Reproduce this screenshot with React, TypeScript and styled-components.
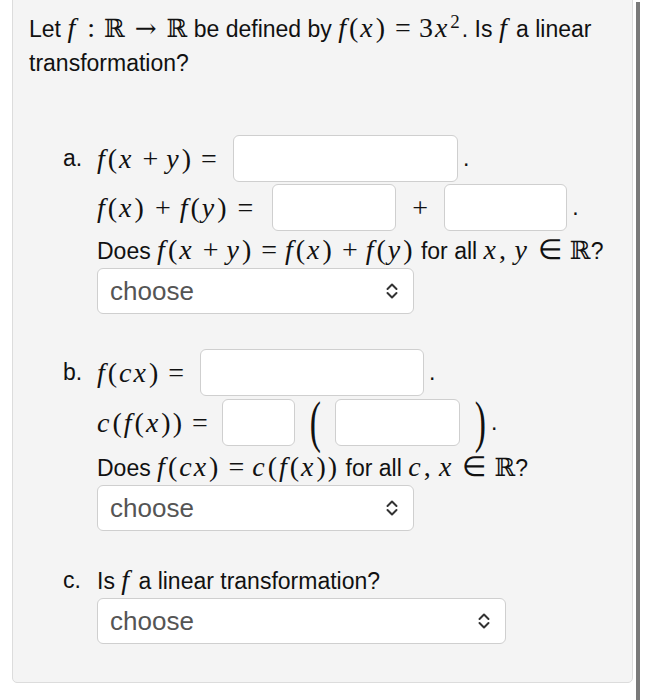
import React from 'react';
import styled, { createGlobalStyle } from 'styled-components';

const GlobalStyle = createGlobalStyle`
  html, body {
    margin: 0;
    padding: 0;
    background: #ffffff;
  }
  body {
    font-family: 'Liberation Sans', Arial, sans-serif;
    color: #111;
  }
`;

const Page = styled.div`
  display: flex;
  align-items: stretch;
  width: 647px;
  height: 700px;
  overflow: hidden;
`;

const Panel = styled.div`
  margin: -10px 0 0 12px;
  width: 621px;
  height: 693px;
  box-sizing: border-box;
  padding: 20px 16px 0 16px;
  background: #f4f4f4;
  border: 1px solid #dcdcdc;
  border-radius: 5px;
`;

const ScrollBar = styled.div`
  margin: 2px 0 0 3px;
  width: 4px;
  background: #7a7a7a;
`;

const Intro = styled.p`
  margin: 0;
  font-size: 23px;
  line-height: 34px;
  white-space: nowrap;
`;

const Parts = styled.div`
  display: flex;
  flex-direction: column;
  margin-top: 55px;
  padding-left: 34px;
`;

const Part = styled.div<{ $gap: number }>`
  display: grid;
  grid-template-columns: 34px 1fr;
  margin-top: ${(p) => p.$gap}px;
`;

const Label = styled.div<{ $lh?: number }>`
  font-size: 23px;
  line-height: ${(p) => p.$lh ?? 47}px;
`;

const Body = styled.div`
  display: flex;
  flex-direction: column;
`;

const Row = styled.div<{ $top?: number }>`
  display: flex;
  align-items: center;
  height: 47px;
  margin-top: ${(p) => p.$top ?? 0}px;
  white-space: nowrap;
`;

const Line = styled.div<{ $top?: number }>`
  font-size: 23px;
  line-height: 30px;
  margin-top: ${(p) => p.$top ?? 0}px;
  white-space: nowrap;
`;

const M = styled.span`
  font-family: 'Liberation Serif', 'Times New Roman', serif;
  font-size: 28px;
  letter-spacing: 2px;
`;

const I = styled.i`
  font-family: 'Liberation Serif', 'Times New Roman', serif;
  font-style: italic;
  font-size: 28px;
  letter-spacing: 2px;
  padding-right: 1px;
`;

const Op = styled.span<{ $sp?: number }>`
  font-family: 'Liberation Serif', 'Times New Roman', serif;
  font-size: 28px;
  margin: 0 ${(p) => p.$sp ?? 8}px;
`;

const Arrow = styled.span`
  font-family: 'DejaVu Serif', serif;
  font-size: 26px;
  margin: 0 10px;
`;

const DS = styled.span`
  font-family: 'DejaVu Serif', serif;
  font-size: 25px;
`;

const Sup = styled.sup`
  font-family: 'Liberation Serif', serif;
  font-size: 19px;
  line-height: 0;
  margin-right: 2px;
`;

const Field = styled.div<{ $w: number }>`
  width: ${(p) => p.$w}px;
  height: 47px;
  box-sizing: border-box;
  background: #ffffff;
  border: 1px solid #cfcfcf;
  border-radius: 6px;
  flex-shrink: 0;
`;

const Dot = styled.span`
  font-size: 23px;
  margin-left: 5px;
`;

const BigParen = styled.span`
  font-family: 'Liberation Serif', serif;
  font-size: 56px;
  font-weight: 100;
  line-height: 47px;
  transform: scaleX(0.6);
  margin: 0 11px;
`;

const Select = styled.div<{ $w: number; $top?: number }>`
  width: ${(p) => p.$w}px;
  height: 46px;
  margin-top: ${(p) => p.$top ?? 2}px;
  box-sizing: border-box;
  display: flex;
  align-items: center;
  justify-content: space-between;
  padding: 0 14px 0 12px;
  background: #ffffff;
  border: 1px solid #cfcfcf;
  border-radius: 6px;
  font-size: 26px;
  color: #555;
`;

const Chevrons = () => (
  <svg width="14" height="18" viewBox="0 0 14 18" fill="none" stroke="#333" strokeWidth="2" strokeLinecap="round" strokeLinejoin="round">
    <path d="M2.5 7 L7 2.5 L11.5 7" />
    <path d="M2.5 11 L7 15.5 L11.5 11" />
  </svg>
);

const Choose = ({ w, top }: { w: number; top?: number }) => (
  <Select $w={w} $top={top}>
    <span>choose</span>
    <Chevrons />
  </Select>
);

export default function App() {
  return (
    <>
      <GlobalStyle />
      <Page>
        <Panel>
          <Intro>
            Let <I>f</I><Op $sp={9}>:</Op><DS>ℝ</DS><Arrow>→</Arrow><DS>ℝ</DS> be defined by{' '}
            <I>f</I><M>(</M><I>x</I><M>)</M><Op>=</Op><M>3</M><I>x</I><Sup>2</Sup>. Is <I>f</I>{' '}
            a linear
            <br />
            transformation?
          </Intro>

          <Parts>
            <Part $gap={0}>
              <Label>a.</Label>
              <Body>
                <Row>
                  <I>f</I><M>(</M><I>x</I><Op>+</Op><I>y</I><M>)</M><Op>=</Op>
                  <Field $w={225} style={{ marginLeft: 8 }} />
                  <Dot>.</Dot>
                </Row>
                <Row $top={2}>
                  <I>f</I><M>(</M><I>x</I><M>)</M><Op $sp={9}>+</Op><I>f</I><M>(</M><I>y</I><M>)</M>
                  <Op $sp={9}>=</Op>
                  <Field $w={124} style={{ marginLeft: 10 }} />
                  <Op $sp={16}>+</Op>
                  <Field $w={123} />
                  <Dot>.</Dot>
                </Row>
                <Line $top={4}>
                  Does <I>f</I><M>(</M><I>x</I><Op>+</Op><I>y</I><M>)</M><Op>=</Op><I>f</I><M>(</M><I>x</I>
                  <M>)</M><Op>+</Op><I>f</I><M>(</M><I>y</I><M>)</M> for all <I>x</I><M>,</M> <I>y</I>
                  <Op>∈</Op><DS>ℝ</DS>?
                </Line>
                <Choose w={317} />
              </Body>
            </Part>

            <Part $gap={35}>
              <Label>b.</Label>
              <Body>
                <Row>
                  <I>f</I><M>(</M><I>cx</I><M>)</M><Op>=</Op>
                  <Field $w={224} style={{ marginLeft: 8 }} />
                  <Dot>.</Dot>
                </Row>
                <Row $top={3}>
                  <I>c</I><M>(</M><I>f</I><M>(</M><I>x</I><M>))</M><Op>=</Op>
                  <Field $w={73} style={{ marginLeft: 6 }} />
                  <BigParen>(</BigParen>
                  <Field $w={125} />
                  <BigParen>)</BigParen>
                  <Dot style={{ marginLeft: -10 }}>.</Dot>
                </Row>
                <Line $top={6}>
                  Does <I>f</I><M>(</M><I>cx</I><M>)</M><Op>=</Op><I>c</I><M>(</M><I>f</I><M>(</M><I>x</I>
                  <M>))</M> for all <I>c</I><M>,</M> <I>x</I><Op>∈</Op><DS>ℝ</DS>?
                </Line>
                <Choose w={317} />
              </Body>
            </Part>

            <Part $gap={34}>
              <Label $lh={30}>c.</Label>
              <Body>
                <Line>
                  Is <I>f</I> a linear transformation?
                </Line>
                <Choose w={409} />
              </Body>
            </Part>
          </Parts>
        </Panel>
        <ScrollBar />
      </Page>
    </>
  );
}
